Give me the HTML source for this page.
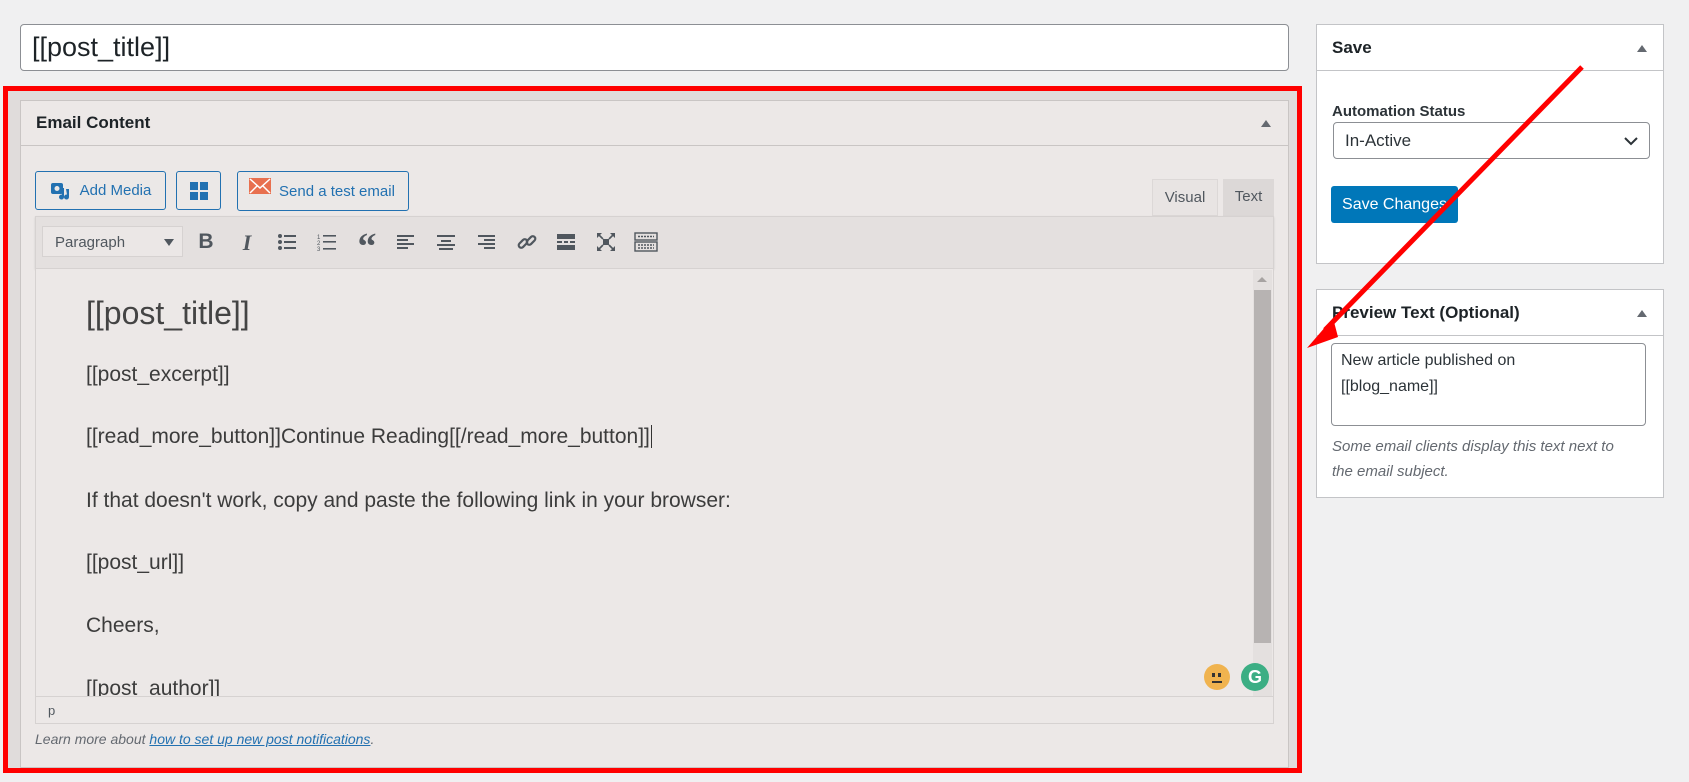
<!DOCTYPE html>
<html><head><meta charset="utf-8"><style>
*{box-sizing:border-box;margin:0;padding:0}
body{width:1689px;height:782px;background:#f0f0f1;font-family:"Liberation Sans",sans-serif;position:relative;overflow:hidden;color:#1d2327}
.a{position:absolute}
.btn{position:absolute;border:1px solid #2271b1;border-radius:3px;background:#ebe8e7;color:#2271b1;font-size:15px;display:flex;align-items:center;justify-content:center;gap:8px}
.ic{position:absolute;top:232px;width:20px;height:20px}
.p{position:absolute;left:86px;font-size:21px;color:#3c3c3c;letter-spacing:0;white-space:nowrap}
</style></head><body>
<div class="a" style="left:20px;top:24px;width:1269px;height:47px;background:#fff;border:1px solid #8c8f94;border-radius:4px;font-size:27px;padding:7px 0 0 11px;color:#1d2327">[[post_title]]</div>

<div class="a" style="left:3px;top:86px;width:1299px;height:687px;border:5px solid #ff0000;background:#e0dcdb"></div>
<div class="a" style="left:20px;top:100px;width:1269px;height:668px;background:#ece8e7;border:1px solid #c9c5c4"></div>
<div class="a" style="left:20px;top:145px;width:1269px;height:1px;background:#c9c5c4"></div>
<div class="a" style="left:36px;top:113px;font-size:17px;font-weight:bold;color:#1d2327">Email Content</div>
<div class="a" style="left:1261px;top:120px;width:0;height:0;border-left:5px solid transparent;border-right:5px solid transparent;border-bottom:7px solid #646970"></div>

<div class="btn" style="left:35px;top:171px;width:131px;height:39px"><svg width="22" height="22" viewBox="0 0 22 22"><rect x="1" y="3" width="12" height="11" rx="2" fill="#2271b1"/><circle cx="7" cy="8.5" r="2.5" fill="#ebe8e7"/><path d="M14 8v9a2.5 2.5 0 1 1-2-2.4V8z M16 9h3v8a2.5 2.5 0 1 1-2-2.4" fill="#2271b1"/></svg>Add Media</div>
<div class="btn" style="left:176px;top:171px;width:45px;height:39px"><svg width="18" height="18"><rect x="0" y="0" width="8" height="8" fill="#2271b1"/><rect x="10" y="0" width="8" height="8" fill="#2271b1"/><rect x="0" y="10" width="8" height="8" fill="#2271b1"/><rect x="10" y="10" width="8" height="8" fill="#2271b1"/></svg></div>
<div class="btn" style="left:237px;top:171px;width:172px;height:40px;justify-content:flex-start;padding-left:11px"><svg width="22" height="18" style="margin-top:-8px"><rect width="22" height="16" fill="#e8704f"/><path d="M1 1l10 9 10-9M1 15l7-7M21 15l-7-7" stroke="#fff" stroke-width="1.5" fill="none"/></svg>Send a test email</div>

<div class="a" style="left:1152px;top:179px;width:66px;height:37px;border:1px solid #dcd8d7;background:#e8e4e3;color:#50575e;font-size:15px;text-align:center;line-height:35px">Visual</div>
<div class="a" style="left:1223px;top:179px;width:51px;height:37px;background:#dcd8d7;color:#50575e;font-size:15px;text-align:center;line-height:35px">Text</div>

<div class="a" style="left:35px;top:216px;width:1239px;height:53px;background:#e4e0df;border:1px solid #d6d2d1;box-shadow:0 1px 2px rgba(0,0,0,.12)"></div>
<div class="a" style="left:42px;top:226px;width:141px;height:31px;border:1px solid #d6d2d1;background:#ebe7e6;color:#50575e;font-size:15px;padding:7px 0 0 12px">Paragraph<span style="position:absolute;right:8px;top:12px;border-left:5px solid transparent;border-right:5px solid transparent;border-top:7px solid #50575e"></span></div>
<div class="ic" style="left:196px;font:bold 21px 'Liberation Sans';color:#50575e;text-align:center;top:230px">B</div>
<div class="ic" style="left:237px;font:italic bold 22px 'Liberation Serif';color:#50575e;text-align:center;top:230px">I</div>
<svg class="ic" style="left:277px" viewBox="0 0 20 20" fill="#50575e"><circle cx="3" cy="4" r="2"/><circle cx="3" cy="10" r="2"/><circle cx="3" cy="16" r="2"/><rect x="7" y="3" width="12" height="2"/><rect x="7" y="9" width="12" height="2"/><rect x="7" y="15" width="12" height="2"/></svg>
<svg class="ic" style="left:317px" viewBox="0 0 20 20" fill="#50575e"><text x="0" y="7" font-size="6">1</text><text x="0" y="13" font-size="6">2</text><text x="0" y="19" font-size="6">3</text><rect x="6" y="3" width="13" height="1.6"/><rect x="6" y="9" width="13" height="1.6"/><rect x="6" y="16" width="13" height="1.6"/></svg>
<div class="ic" style="left:357px;font:bold 38px 'Liberation Serif';color:#50575e;text-align:center;top:228px;line-height:38px">&#8220;</div>
<svg class="ic" style="left:396px" viewBox="0 0 20 20" fill="#50575e"><rect x="1" y="3" width="17" height="2"/><rect x="1" y="7" width="11" height="2"/><rect x="1" y="11" width="17" height="2"/><rect x="1" y="15" width="11" height="2"/></svg>
<svg class="ic" style="left:436px" viewBox="0 0 20 20" fill="#50575e"><rect x="1" y="3" width="18" height="2"/><rect x="5" y="8" width="10" height="2"/><rect x="1" y="12" width="18" height="2"/><rect x="3" y="16" width="14" height="2"/></svg>
<svg class="ic" style="left:476px" viewBox="0 0 20 20" fill="#50575e"><rect x="2" y="3" width="17" height="2"/><rect x="8" y="7" width="11" height="2"/><rect x="2" y="11" width="17" height="2"/><rect x="8" y="15" width="11" height="2"/></svg>
<svg class="ic" style="left:517px" viewBox="0 0 20 20" fill="none" stroke="#50575e" stroke-width="2.2"><rect x="1" y="9" width="10" height="5" rx="2.5" transform="rotate(-45 6 11.5)"/><rect x="9" y="6" width="10" height="5" rx="2.5" transform="rotate(-45 14 8.5)"/></svg>
<svg class="ic" style="left:556px" viewBox="0 0 20 20" fill="#50575e"><rect x="1" y="2" width="18" height="5"/><rect x="1" y="9" width="5" height="2"/><rect x="8" y="9" width="4" height="2"/><rect x="14" y="9" width="5" height="2"/><rect x="1" y="13" width="18" height="5"/></svg>
<svg class="ic" style="left:596px" viewBox="0 0 20 20" fill="#50575e"><rect x="7" y="7" width="6" height="6"/><path d="M1 1h5l-5 5zM19 1v5l-5-5zM1 19v-5l5 5zM19 19h-5l5-5z"/><path d="M3 3l4 4M17 3l-4 4M3 17l4-4M17 17l-4-4" stroke="#50575e" stroke-width="1.6"/></svg>
<svg class="ic" style="left:634px;width:24px" viewBox="0 0 24 20" fill="none" stroke="#50575e" stroke-width="1.4"><rect x="1" y="1" width="22" height="7"/><rect x="1" y="10" width="22" height="9"/><path d="M4 4.5h16M4 13h16M4 16h16" stroke-dasharray="2 1"/></svg>

<div class="a" style="left:35px;top:269px;width:1239px;height:427px;background:#ece8e7;border-left:1px solid #d6d2d1;border-right:1px solid #d6d2d1"></div>
<div class="a" style="left:1253px;top:270px;width:19px;height:426px;background:#e4e0df"></div>
<div class="a" style="left:1257px;top:277px;border-left:5px solid transparent;border-right:5px solid transparent;border-bottom:5px solid #a7a3a2"></div>
<div class="a" style="left:1254px;top:290px;width:17px;height:353px;background:#b7b3b2"></div>

<div class="p" style="top:295px;font-size:32px;color:#444">[[post_title]]</div>
<div class="p" style="top:363px">[[post_excerpt]]</div>
<div class="p" style="top:425px">[[read_more_button]]Continue Reading[[/read_more_button]]<span style="border-left:1px solid #333;margin-left:1px"></span></div>
<div class="p" style="top:489px">If that doesn't work, copy and paste the following link in your browser:</div>
<div class="p" style="top:551px">[[post_url]]</div>
<div class="p" style="top:614px">Cheers,</div>
<div class="a" style="left:86px;top:677px;height:19px;overflow:hidden"><div style="font-size:21px;color:#3c3c3c">[[post_author]]</div></div>

<div class="a" style="left:1204px;top:664px;width:26px;height:26px;border-radius:50%;background:#f0b34f"><span style="position:absolute;left:8px;top:9px;width:3px;height:4px;background:#333"></span><span style="position:absolute;left:14px;top:9px;width:3px;height:4px;background:#333"></span><span style="position:absolute;left:8px;top:17px;width:10px;height:2px;background:#333"></span></div>
<div class="a" style="left:1241px;top:663px;width:28px;height:28px;border-radius:50%;background:#3cae84;color:#fff;font:bold 18px 'Liberation Sans';text-align:center;line-height:28px">G</div>

<div class="a" style="left:35px;top:696px;width:1239px;height:28px;background:#ece8e7;border:1px solid #d6d2d1;color:#50575e;font-size:13px;padding:6px 0 0 12px">p</div>
<div class="a" style="left:35px;top:731px;font-size:14px;font-style:italic;color:#646970">Learn more about <span style="color:#2271b1;text-decoration:underline">how to set up new post notifications</span>.</div>

<div class="a" style="left:1316px;top:24px;width:348px;height:240px;background:#fff;border:1px solid #c3c4c7"></div>
<div class="a" style="left:1316px;top:70px;width:348px;height:1px;background:#c3c4c7"></div>
<div class="a" style="left:1332px;top:38px;font-size:17px;font-weight:bold">Save</div>
<div class="a" style="left:1637px;top:45px;border-left:5px solid transparent;border-right:5px solid transparent;border-bottom:7px solid #646970"></div>
<div class="a" style="left:1332px;top:103px;font-size:15px;font-weight:bold;color:#2c3338">Automation Status</div>
<div class="a" style="left:1333px;top:122px;width:317px;height:37px;border:1px solid #8c8f94;border-radius:4px;font-size:17px;padding:8px 0 0 11px;color:#2c3338">In-Active<svg style="position:absolute;right:10px;top:13px" width="16" height="10"><path d="M2 2l6 6 6-6" stroke="#2c3338" stroke-width="2" fill="none"/></svg></div>
<div class="a" style="left:1331px;top:186px;width:127px;height:37px;background:#0077b9;border-radius:3px;color:#fff;font-size:16px;text-align:center;line-height:37px">Save Changes</div>

<div class="a" style="left:1316px;top:289px;width:348px;height:209px;background:#fff;border:1px solid #c3c4c7"></div>
<div class="a" style="left:1316px;top:335px;width:348px;height:1px;background:#c3c4c7"></div>
<div class="a" style="left:1332px;top:303px;font-size:17px;font-weight:bold">Preview Text (Optional)</div>
<div class="a" style="left:1637px;top:310px;border-left:5px solid transparent;border-right:5px solid transparent;border-bottom:7px solid #646970"></div>
<div class="a" style="left:1331px;top:343px;width:315px;height:83px;border:1px solid #8c8f94;border-radius:4px;font-size:16px;line-height:26px;padding:4px 0 0 9px;color:#2c3338">New article published on<br>[[blog_name]]</div>
<div class="a" style="left:1332px;top:434px;font-size:15px;font-style:italic;color:#646970;line-height:25px">Some email clients display this text next to<br>the email subject.</div>

<svg class="a" style="left:0;top:0" width="1689" height="782"><line x1="1582" y1="67" x2="1325" y2="330" stroke="#f00" stroke-width="5"/><polygon points="1307,348 1333,318 1338,337" fill="#f00"/></svg>
</body></html>
